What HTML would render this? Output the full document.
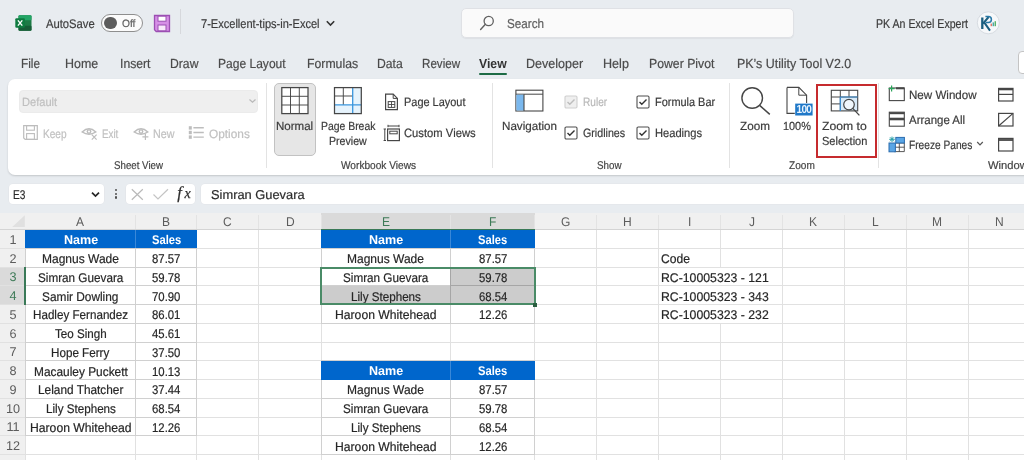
<!DOCTYPE html><html><head><meta charset="utf-8"><style>
html,body{margin:0;padding:0;}
body{width:1024px;height:460px;overflow:hidden;position:relative;background:#e8ecf0;font-family:"Liberation Sans",sans-serif;}
.t{position:absolute;white-space:nowrap;line-height:1;transform-origin:0 0;text-rendering:geometricPrecision;-webkit-text-stroke:0.2px currentColor;}
.b{-webkit-text-stroke:0;}
</style></head><body><div style="position:absolute;left:0;top:0;width:1024px;height:460px;overflow:hidden;will-change:transform;">
<svg style="position:absolute;left:15px;top:15px" width="17" height="16" viewBox="0 0 17 16">
<rect x="3.5" y="0.3" width="13" height="15.4" rx="1.3" fill="#1d7a45"/>
<rect x="3.5" y="0.3" width="13" height="5" fill="#23a566" rx="1"/>
<rect x="3.5" y="10.7" width="13" height="5" fill="#175c36" rx="1"/>
<rect x="0.3" y="3.2" width="9.6" height="9.6" rx="1.1" fill="#0f7b40"/>
<path d="M2.9 5.4 L7.3 10.6 M7.3 5.4 L2.9 10.6" stroke="#fff" stroke-width="1.4"/>
</svg>
<div class="t" style="left:46.00px;top:18px;font-size:12.50px;color:#3d3d3d;transform:scaleX(0.899);">AutoSave</div>
<div style="position:absolute;left:101px;top:13.7px;width:39.6px;height:15.9px;border:1.3px solid #8e8e8e;border-radius:10px;background:#fbfbfb;"></div>
<div style="position:absolute;left:104.2px;top:16.7px;width:12.8px;height:12.8px;border-radius:50%;background:#5c5c5c;"></div>
<div class="t" style="left:122.00px;top:19px;font-size:10.61px;color:#616161;transform:scaleX(0.965);">Off</div>
<svg style="position:absolute;left:153px;top:14px" width="19" height="19" viewBox="0 0 19 19">
<path d="M1.5 1.5 H16.5 V17.5 H3.2 L1.5 15.8 Z" fill="#d68fe6" stroke="#9c4fb3" stroke-width="1.3"/>
<rect x="5" y="2.2" width="8" height="5" fill="#fff" stroke="#9c4fb3" stroke-width="1"/>
<rect x="5" y="11" width="8" height="5.8" fill="#f8e8fb" stroke="#9c4fb3" stroke-width="1"/>
</svg>
<div style="position:absolute;left:180px;top:9px;width:1px;height:25px;background:#d6d8dc;"></div>
<div class="t" style="left:201.00px;top:18px;font-size:12.79px;color:#3b3b3b;transform:scaleX(0.865);">7-Excellent-tips-in-Excel</div>
<svg style="position:absolute;left:325px;top:19px" width="11" height="9" viewBox="0 0 11 9"><path d="M1.8 2.3 L5.5 6 L9.2 2.3" fill="none" stroke="#333" stroke-width="1.6"/></svg>
<div style="position:absolute;left:460.5px;top:8px;width:333px;height:30px;background:#fafafa;border:1px solid #dfe1e5;border-radius:5px;box-sizing:border-box;box-shadow:0 1px 1px rgba(0,0,0,0.05);"></div>
<svg style="position:absolute;left:478px;top:14px" width="18" height="18" viewBox="0 0 18 18"><circle cx="10.7" cy="7" r="4.6" fill="none" stroke="#616161" stroke-width="1.3"/><path d="M7.4 10.3 L2.6 15.4" stroke="#616161" stroke-width="1.4" stroke-linecap="round"/></svg>
<div class="t" style="left:507.40px;top:18px;font-size:12.94px;color:#616161;transform:scaleX(0.903);">Search</div>
<div class="t" style="left:875.50px;top:18px;font-size:12.65px;color:#3b3b3b;transform:scaleX(0.839);">PK An Excel Expert</div>
<svg style="position:absolute;left:976px;top:11px" width="25" height="25" viewBox="0 0 25 25">
<circle cx="12.3" cy="11.8" r="11" fill="#f6f8fa" stroke="#cfd4da" stroke-width="0.8"/>
<path d="M6.3 6.5 V18" stroke="#1b5f80" stroke-width="2.3" fill="none"/>
<path d="M7 12.6 L12.6 6 M8.2 11.4 L14 19.6" stroke="#1b5f80" stroke-width="2" fill="none"/>
<path d="M9.4 5.4 H12.4 A3 3 0 0 1 12.4 11.4 H10" stroke="#2a7aa8" stroke-width="1.5" fill="none"/>
<rect x="14.6" y="12.6" width="1.3" height="2.6" fill="#e06a5a"/><rect x="16.6" y="11.4" width="1.3" height="3.8" fill="#3aa0a0"/><rect x="18.6" y="10.2" width="1.3" height="5" fill="#4aaa5a"/>
</svg>
<div class="t" style="left:21.00px;top:57px;font-size:13.23px;color:#4a4a4a;transform:scaleX(0.892);">File</div>
<div class="t" style="left:65.40px;top:57px;font-size:13.23px;color:#4a4a4a;transform:scaleX(0.941);">Home</div>
<div class="t" style="left:119.50px;top:57px;font-size:13.23px;color:#4a4a4a;transform:scaleX(0.922);">Insert</div>
<div class="t" style="left:170.00px;top:57px;font-size:13.23px;color:#4a4a4a;transform:scaleX(0.922);">Draw</div>
<div class="t" style="left:218.30px;top:57px;font-size:13.23px;color:#4a4a4a;transform:scaleX(0.911);">Page Layout</div>
<div class="t" style="left:306.80px;top:57px;font-size:13.23px;color:#4a4a4a;transform:scaleX(0.927);">Formulas</div>
<div class="t" style="left:377.20px;top:57px;font-size:13.23px;color:#4a4a4a;transform:scaleX(0.923);">Data</div>
<div class="t" style="left:421.70px;top:57px;font-size:13.23px;color:#4a4a4a;transform:scaleX(0.878);">Review</div>
<div class="t" style="left:525.60px;top:57px;font-size:13.23px;color:#4a4a4a;transform:scaleX(0.949);">Developer</div>
<div class="t" style="left:602.70px;top:57px;font-size:13.23px;color:#4a4a4a;transform:scaleX(0.952);">Help</div>
<div class="t" style="left:648.90px;top:57px;font-size:13.23px;color:#4a4a4a;transform:scaleX(0.928);">Power Pivot</div>
<div class="t" style="left:736.70px;top:57px;font-size:13.23px;color:#4a4a4a;transform:scaleX(0.940);">PK’s Utility Tool V2.0</div>
<div class="t b" style="left:479.30px;top:57px;font-size:13.23px;color:#333333;font-weight:bold;transform:scaleX(0.925);">View</div>
<div style="position:absolute;left:478.8px;top:73.2px;width:28.7px;height:2.2px;background:#1d6b45;border-radius:1.1px;"></div>
<div style="position:absolute;left:1017.5px;top:51px;width:10px;height:23px;background:#fff;border:1px solid #c4c4c4;border-radius:4px;box-sizing:border-box;"></div>
<div style="position:absolute;left:8px;top:79px;width:1030px;height:96px;background:#fff;border-radius:7px;box-shadow:0 1px 2px rgba(0,0,0,0.16);"></div>
<div style="position:absolute;left:19.3px;top:89.9px;width:238.3px;height:23.3px;background:#efefef;border:1px solid #ebebeb;border-radius:4px;box-sizing:border-box;"></div>
<div class="t" style="left:22.30px;top:97px;font-size:11.92px;color:#bfbfbf;transform:scaleX(0.932);">Default</div>
<svg style="position:absolute;left:248px;top:97px" width="9" height="8" viewBox="0 0 9 8"><path d="M1.5 2.5 L4.5 5.3 L7.5 2.5" fill="none" stroke="#b8b8b8" stroke-width="1.2"/></svg>
<svg style="position:absolute;left:22px;top:124px" width="17" height="17" viewBox="0 0 17 17">
<path d="M1.7 1.6 H15.3 V15.4 H3.2 L1.7 13.9 Z" fill="none" stroke="#bdbdbd" stroke-width="1.2"/>
<rect x="4.6" y="1.6" width="7.8" height="4.6" fill="none" stroke="#bdbdbd" stroke-width="1.1"/>
<rect x="4.6" y="9.6" width="7.8" height="5.8" fill="none" stroke="#bdbdbd" stroke-width="1.1"/></svg>
<div class="t" style="left:43.00px;top:128px;font-size:12.21px;color:#c0c0c0;transform:scaleX(0.828);">Keep</div>
<svg style="position:absolute;left:81px;top:125px" width="18" height="16" viewBox="0 0 18 16">
<path d="M1.2 7 Q8 0.6 14.8 7 Q8 11.6 1.2 7 Z" fill="none" stroke="#bdbdbd" stroke-width="1.5"/><circle cx="8" cy="6.6" r="2.4" fill="#bdbdbd"/><circle cx="8" cy="6.6" r="1" fill="#fff"/>
<path d="M10.8 9.6 L15.6 14.6 M15.6 9.6 L10.8 14.6" stroke="#bdbdbd" stroke-width="1.2"/></svg>
<div class="t" style="left:101.70px;top:128px;font-size:12.21px;color:#c0c0c0;transform:scaleX(0.801);">Exit</div>
<svg style="position:absolute;left:133px;top:125px" width="18" height="16" viewBox="0 0 18 16">
<path d="M1.2 7 Q8 0.6 14.8 7 Q8 11.6 1.2 7 Z" fill="none" stroke="#bdbdbd" stroke-width="1.5"/><circle cx="8" cy="6.6" r="2.4" fill="#bdbdbd"/><circle cx="8" cy="6.6" r="1" fill="#fff"/>
<path d="M12.4 8.8 V15 M9.4 11.9 H15.4" stroke="#bdbdbd" stroke-width="1.2"/></svg>
<div class="t" style="left:152.50px;top:128px;font-size:12.21px;color:#c0c0c0;transform:scaleX(0.879);">New</div>
<svg style="position:absolute;left:188px;top:125px" width="17" height="16" viewBox="0 0 17 16">
<rect x="0.8" y="1.2" width="3" height="3.4" fill="#bdbdbd"/><rect x="0.8" y="5.8" width="3" height="3.4" fill="#bdbdbd"/><rect x="0.8" y="10.4" width="3" height="3.4" fill="#bdbdbd"/>
<path d="M5.4 2.8 H15.8 M5.4 7.5 H15.8 M5.4 12.1 H15.8" stroke="#bdbdbd" stroke-width="1.4"/></svg>
<div class="t" style="left:208.70px;top:128px;font-size:12.21px;color:#c0c0c0;transform:scaleX(0.972);">Options</div>
<div class="t" style="left:114.00px;top:161px;font-size:11.19px;color:#444444;transform:scaleX(0.868);">Sheet View</div>
<div style="position:absolute;left:265.5px;top:83px;width:1px;height:85px;background:#e3e3e3;"></div>
<div style="position:absolute;left:273.8px;top:82.6px;width:42.3px;height:73.1px;background:#e6e6e6;border:1px solid #c2c2c2;border-radius:5px;box-sizing:border-box;"></div>
<svg style="position:absolute;left:280px;top:86px" width="30" height="29" viewBox="0 0 30 29">
<rect x="1.8" y="1.6" width="26.2" height="26" fill="#fff" stroke="#464646" stroke-width="1.25"/>
<path d="M10.5 1.6 V27.6 M19.3 1.6 V27.6 M1.8 10.3 H28 M1.8 19 H28" stroke="#464646" stroke-width="0.95"/></svg>
<div class="t" style="left:276.00px;top:121px;font-size:11.77px;color:#3b3b3b;transform:scaleX(0.980);">Normal</div>
<svg style="position:absolute;left:333px;top:86px" width="30" height="29" viewBox="0 0 30 29">
<rect x="1.5" y="1.6" width="26.8" height="26" fill="#fff"/>
<rect x="19.7" y="1.6" width="8.6" height="26" fill="#e6f3fc"/><rect x="1.5" y="18.9" width="26.8" height="8.7" fill="#e6f3fc"/>
<path d="M10.3 1.6 V18.9 M1.5 10 H19.7" stroke="#464646" stroke-width="0.95"/>
<path d="M19.7 1.6 V27.6 M1.5 18.9 H28.3" stroke="#3a96dd" stroke-width="1.3"/>
<rect x="1.5" y="1.6" width="26.8" height="26" fill="none" stroke="#464646" stroke-width="1.25"/></svg>
<div class="t" style="left:320.80px;top:121px;font-size:11.77px;color:#3b3b3b;transform:scaleX(0.885);">Page Break</div>
<div class="t" style="left:328.80px;top:136px;font-size:11.77px;color:#3b3b3b;transform:scaleX(0.902);">Preview</div>
<svg style="position:absolute;left:384px;top:93px" width="15" height="18" viewBox="0 0 15 18">
<path d="M1.6 1.2 H9.2 L13.4 5.4 V16.6 H1.6 Z" fill="none" stroke="#464646" stroke-width="1.2"/><path d="M9.2 1.2 V5.4 H13.4" fill="none" stroke="#464646" stroke-width="1"/>
<rect x="4.2" y="8.6" width="6.6" height="5.8" fill="none" stroke="#464646" stroke-width="1"/><path d="M7.5 8.6 V14.4 M4.2 11.5 H10.8" stroke="#464646" stroke-width="0.9"/></svg>
<div class="t" style="left:403.80px;top:96px;font-size:12.06px;color:#3b3b3b;transform:scaleX(0.908);">Page Layout</div>
<svg style="position:absolute;left:383px;top:124px" width="18" height="18" viewBox="0 0 18 18">
<path d="M5 2 H16 M5 0.8 V3.2 M16 0.8 V3.2 M1.8 5 V16.5 M0.6 5 H3 M0.6 16.5 H3" stroke="#464646" stroke-width="1"/>
<rect x="4.6" y="5" width="11.8" height="11.6" fill="none" stroke="#464646" stroke-width="1.2"/>
<rect x="6.8" y="7.2" width="7.4" height="2.6" fill="none" stroke="#464646" stroke-width="1"/></svg>
<div class="t" style="left:403.50px;top:127px;font-size:12.06px;color:#3b3b3b;transform:scaleX(0.933);">Custom Views</div>
<div class="t" style="left:340.90px;top:161px;font-size:11.19px;color:#444444;transform:scaleX(0.905);">Workbook Views</div>
<div style="position:absolute;left:491.5px;top:83px;width:1px;height:85px;background:#e3e3e3;"></div>
<svg style="position:absolute;left:515px;top:89px" width="29" height="23" viewBox="0 0 29 23">
<rect x="0.9" y="1.2" width="27" height="20.8" fill="#fff" stroke="#464646" stroke-width="1.1"/>
<path d="M0.9 5.2 H27.9" stroke="#464646" stroke-width="1"/>
<rect x="1.4" y="5.7" width="7.6" height="15.8" fill="#7ab8ee"/><path d="M9 5.2 V22" stroke="#464646" stroke-width="1.1"/></svg>
<div class="t" style="left:501.50px;top:121px;font-size:11.77px;color:#3b3b3b;transform:scaleX(0.989);">Navigation</div>
<svg style="position:absolute;left:563.5px;top:94.8px" width="14" height="14" viewBox="0 0 14 14">
<rect x="1" y="1" width="12" height="12" rx="1.2" fill="#efefef" stroke="#cfcfcf" stroke-width="1.1"/>
<path d="M3.5 7 L5.8 9.3 L10.5 4.6" fill="none" stroke="#bdbdbd" stroke-width="1.4"/></svg>
<div class="t" style="left:582.80px;top:96px;font-size:12.06px;color:#b8b8b8;transform:scaleX(0.839);">Ruler</div>
<svg style="position:absolute;left:563.5px;top:125.6px" width="14" height="14" viewBox="0 0 14 14">
<rect x="1" y="1" width="12" height="12" rx="1.2" fill="#fff" stroke="#4f4f4f" stroke-width="1.1"/>
<path d="M3.5 7 L5.8 9.3 L10.5 4.6" fill="none" stroke="#333" stroke-width="1.4"/></svg>
<div class="t" style="left:582.80px;top:127px;font-size:12.06px;color:#3b3b3b;transform:scaleX(0.886);">Gridlines</div>
<svg style="position:absolute;left:635.5px;top:94.8px" width="14" height="14" viewBox="0 0 14 14">
<rect x="1" y="1" width="12" height="12" rx="1.2" fill="#fff" stroke="#4f4f4f" stroke-width="1.1"/>
<path d="M3.5 7 L5.8 9.3 L10.5 4.6" fill="none" stroke="#333" stroke-width="1.4"/></svg>
<div class="t" style="left:654.50px;top:96px;font-size:12.06px;color:#3b3b3b;transform:scaleX(0.907);">Formula Bar</div>
<svg style="position:absolute;left:635.5px;top:125.6px" width="14" height="14" viewBox="0 0 14 14">
<rect x="1" y="1" width="12" height="12" rx="1.2" fill="#fff" stroke="#4f4f4f" stroke-width="1.1"/>
<path d="M3.5 7 L5.8 9.3 L10.5 4.6" fill="none" stroke="#333" stroke-width="1.4"/></svg>
<div class="t" style="left:654.50px;top:127px;font-size:12.06px;color:#3b3b3b;transform:scaleX(0.924);">Headings</div>
<div class="t" style="left:597.00px;top:161px;font-size:11.19px;color:#444444;transform:scaleX(0.874);">Show</div>
<div style="position:absolute;left:728.5px;top:83px;width:1px;height:85px;background:#e3e3e3;"></div>
<svg style="position:absolute;left:740px;top:86px" width="32" height="30" viewBox="0 0 32 30">
<circle cx="12.2" cy="12" r="10.3" fill="none" stroke="#464646" stroke-width="1.4"/>
<path d="M19.6 19.4 L29.8 28.4" stroke="#464646" stroke-width="1.5"/></svg>
<div class="t" style="left:740.30px;top:121px;font-size:11.77px;color:#3b3b3b;transform:scaleX(0.994);">Zoom</div>
<svg style="position:absolute;left:785px;top:86px" width="30" height="31" viewBox="0 0 30 31">
<path d="M2 1.4 H13.8 L21.6 9.2 V17 M2 1.4 V27.4 H9.8" fill="none" stroke="#464646" stroke-width="1.1"/><path d="M13.8 1.4 V9.2 H21.6" fill="none" stroke="#464646" stroke-width="1"/>
<rect x="10.2" y="17.6" width="17.4" height="11.9" fill="#1f78c8"/>
<text x="18.9" y="27.4" font-family="Liberation Sans" font-weight="bold" font-size="10" fill="#e8f4ff" text-anchor="middle" letter-spacing="-0.7">100</text></svg>
<div class="t" style="left:783.40px;top:121px;font-size:11.77px;color:#3b3b3b;transform:scaleX(0.926);">100%</div>
<div style="position:absolute;left:816px;top:84px;width:61px;height:73.8px;border:2px solid #c62b2e;box-sizing:border-box;"></div>
<svg style="position:absolute;left:829px;top:88px" width="34" height="30" viewBox="0 0 34 30">
<rect x="11.3" y="9" width="17.4" height="13.9" fill="#d9ebf9"/>
<rect x="2.3" y="2.3" width="26.4" height="20.6" fill="none" stroke="#464646" stroke-width="1.1"/>
<path d="M11.3 2.3 V22.9 M20 2.3 V9 M2.3 9 H28.7 M2.3 15.9 H11.3" stroke="#464646" stroke-width="1"/>
<path d="M11.3 9 V22.9 M11.3 9 H28.7" stroke="#3a8fd6" stroke-width="1.2"/>
<circle cx="20" cy="16.6" r="5.3" fill="#fff" fill-opacity="0.6" stroke="#464646" stroke-width="1.2"/>
<path d="M23.8 20.4 L30.4 27.4" stroke="#464646" stroke-width="1.3"/></svg>
<div class="t" style="left:822.30px;top:121px;font-size:11.77px;color:#3b3b3b;transform:scaleX(1.035);">Zoom to</div>
<div class="t" style="left:821.60px;top:136px;font-size:11.77px;color:#3b3b3b;transform:scaleX(0.937);">Selection</div>
<div class="t" style="left:789.30px;top:161px;font-size:11.19px;color:#444444;transform:scaleX(0.902);">Zoom</div>
<div style="position:absolute;left:877.5px;top:83px;width:1px;height:85px;background:#e3e3e3;"></div>
<svg style="position:absolute;left:887px;top:85px" width="19" height="17" viewBox="0 0 19 17">
<rect x="2.3" y="3" width="15" height="12.6" fill="none" stroke="#464646" stroke-width="1.1"/><path d="M9 3.3 H17.3" stroke="#464646" stroke-width="2"/>
<path d="M4.6 0.6 V6.6 M1.6 3.6 H7.6" stroke="#2aa35a" stroke-width="1.2"/></svg>
<div class="t" style="left:909.00px;top:89px;font-size:12.06px;color:#3b3b3b;transform:scaleX(0.961);">New Window</div>
<svg style="position:absolute;left:887px;top:110px" width="19" height="18" viewBox="0 0 19 18">
<rect x="2.3" y="2.2" width="15" height="14" fill="none" stroke="#464646" stroke-width="1.1"/><path d="M2.3 3.2 H17.3" stroke="#464646" stroke-width="2"/><path d="M2.3 9 H17.3" stroke="#464646" stroke-width="2.6"/></svg>
<div class="t" style="left:909.00px;top:114px;font-size:12.06px;color:#3b3b3b;transform:scaleX(0.952);">Arrange All</div>
<svg style="position:absolute;left:887px;top:136px" width="19" height="17" viewBox="0 0 19 17">
<path d="M9 7 H17.3 V15.6 H7 M12.3 7 V15.6 M7 11.2 H17.3" fill="none" stroke="#464646" stroke-width="0.9"/>
<rect x="8.8" y="1.4" width="8.6" height="5.6" fill="#5aa6e6" stroke="#2b6cae" stroke-width="1"/>
<rect x="2" y="7" width="6.4" height="8.8" fill="#5aa6e6" stroke="#2b6cae" stroke-width="1"/>
<path d="M5 0.6 V6 M2.2 3.3 H7.8 M3 1.3 L7 5.3 M7 1.3 L3 5.3" stroke="#2aa0a8" stroke-width="1"/></svg>
<div class="t" style="left:909.00px;top:139px;font-size:12.06px;color:#3b3b3b;transform:scaleX(0.844);">Freeze Panes</div>
<svg style="position:absolute;left:976px;top:140px" width="8" height="7" viewBox="0 0 8 7"><path d="M1.2 2 L4 4.8 L6.8 2" fill="none" stroke="#555" stroke-width="1.2"/></svg>
<svg style="position:absolute;left:997px;top:86px" width="18" height="70" viewBox="0 0 18 70">
<rect x="1.6" y="2.4" width="14.4" height="12.6" fill="none" stroke="#464646" stroke-width="1.2"/><path d="M1.6 8.4 H16" stroke="#464646" stroke-width="1.2"/><path d="M1.6 3.4 H16" stroke="#464646" stroke-width="1.8"/>
<rect x="1.6" y="27.4" width="14.4" height="12.6" fill="none" stroke="#464646" stroke-width="1.2"/><path d="M1.6 40 L16 27.4" stroke="#464646" stroke-width="1.2"/>
<rect x="1.6" y="52.4" width="14.4" height="12.6" fill="none" stroke="#464646" stroke-width="1.2"/><path d="M1.6 54 H16" stroke="#464646" stroke-width="1.8"/></svg>
<div class="t" style="left:988.00px;top:161px;font-size:11.19px;color:#444444;transform:scaleX(1.000);">Window</div>
<div style="position:absolute;left:8.8px;top:183.5px;width:95.7px;height:20.7px;background:#fff;border-radius:4px;box-shadow:0 0 0 0.6px #e2e4e8;"></div>
<div class="t" style="left:13.00px;top:189px;font-size:12.65px;color:#2b2b2b;transform:scaleX(0.802);">E3</div>
<svg style="position:absolute;left:90px;top:190px" width="11" height="9" viewBox="0 0 11 9"><path d="M2 2.6 L5.5 6.1 L9 2.6" fill="none" stroke="#262626" stroke-width="1.7"/></svg>
<div style="position:absolute;left:114.5px;top:189.0px;width:2.4px;height:2.4px;background:#505050;border-radius:50%;"></div>
<div style="position:absolute;left:114.5px;top:192.6px;width:2.4px;height:2.4px;background:#505050;border-radius:50%;"></div>
<div style="position:absolute;left:114.5px;top:196.2px;width:2.4px;height:2.4px;background:#505050;border-radius:50%;"></div>
<div style="position:absolute;left:126px;top:183.5px;width:69.3px;height:20.7px;background:#fff;border-radius:4px;box-shadow:0 0 0 0.6px #e2e4e8;"></div>
<svg style="position:absolute;left:130px;top:188px" width="16" height="13" viewBox="0 0 16 13"><path d="M1.8 1.2 L12.8 11.8 M12.8 1.2 L1.8 11.8" stroke="#b9b9b9" stroke-width="1.2"/></svg>
<svg style="position:absolute;left:152px;top:188px" width="18" height="13" viewBox="0 0 18 13"><path d="M1.5 6.5 L6 11 L16 1.2" fill="none" stroke="#c4c4c4" stroke-width="1.2"/></svg>
<svg style="position:absolute;left:175px;top:184px" width="20" height="20" viewBox="0 0 20 20"><text x="2.2" y="14.2" font-family="Liberation Serif" font-style="italic" font-size="16.5" fill="#2e2e2e" stroke="#2e2e2e" stroke-width="0.25">f</text><text x="9.4" y="14.2" font-family="Liberation Serif" font-style="italic" font-size="14" fill="#2e2e2e" stroke="#2e2e2e" stroke-width="0.25">x</text></svg>
<div style="position:absolute;left:201px;top:183.5px;width:830px;height:20.7px;background:#fff;border-radius:4px;box-shadow:0 0 0 0.6px #e2e4e8;"></div>
<div class="t" style="left:211.00px;top:189px;font-size:12.79px;color:#2b2b2b;transform:scaleX(1.006);">Simran Guevara</div>
<div style="position:absolute;left:25px;top:229.7px;width:1000px;height:231px;background:#fff;"></div>
<div style="position:absolute;left:0px;top:213px;width:1024px;height:16.69999999999999px;background:#f0f0f0;"></div>
<div style="position:absolute;left:0px;top:229.7px;width:25px;height:231px;background:#f0f0f0;"></div>
<div style="position:absolute;left:321px;top:213px;width:213.60000000000002px;height:16.69999999999999px;background:#dadada;"></div>
<div style="position:absolute;left:0px;top:267.2px;width:25px;height:37.5px;background:#dadada;"></div>
<div style="position:absolute;left:24.5px;top:229.7px;width:1px;height:230.3px;background:#e1e1e1;"></div>
<div style="position:absolute;left:135.1px;top:214.5px;width:1px;height:15px;background:#e3e3e3;"></div>
<div style="position:absolute;left:135.1px;top:229.7px;width:1px;height:230.3px;background:#e1e1e1;"></div>
<div style="position:absolute;left:196.2px;top:214.5px;width:1px;height:15px;background:#e3e3e3;"></div>
<div style="position:absolute;left:196.2px;top:229.7px;width:1px;height:230.3px;background:#e1e1e1;"></div>
<div style="position:absolute;left:258.4px;top:214.5px;width:1px;height:15px;background:#e3e3e3;"></div>
<div style="position:absolute;left:258.4px;top:229.7px;width:1px;height:230.3px;background:#e1e1e1;"></div>
<div style="position:absolute;left:320.5px;top:214.5px;width:1px;height:15px;background:#e3e3e3;"></div>
<div style="position:absolute;left:320.5px;top:229.7px;width:1px;height:230.3px;background:#e1e1e1;"></div>
<div style="position:absolute;left:449.7px;top:214.5px;width:1px;height:15px;background:#e3e3e3;"></div>
<div style="position:absolute;left:449.7px;top:229.7px;width:1px;height:230.3px;background:#e1e1e1;"></div>
<div style="position:absolute;left:534.1px;top:214.5px;width:1px;height:15px;background:#e3e3e3;"></div>
<div style="position:absolute;left:534.1px;top:229.7px;width:1px;height:230.3px;background:#e1e1e1;"></div>
<div style="position:absolute;left:596.1px;top:214.5px;width:1px;height:15px;background:#e3e3e3;"></div>
<div style="position:absolute;left:596.1px;top:229.7px;width:1px;height:230.3px;background:#e1e1e1;"></div>
<div style="position:absolute;left:658.1px;top:214.5px;width:1px;height:15px;background:#e3e3e3;"></div>
<div style="position:absolute;left:658.1px;top:229.7px;width:1px;height:230.3px;background:#e1e1e1;"></div>
<div style="position:absolute;left:720.1px;top:214.5px;width:1px;height:15px;background:#e3e3e3;"></div>
<div style="position:absolute;left:720.1px;top:229.7px;width:1px;height:37.5px;background:#e1e1e1;"></div>
<div style="position:absolute;left:720.1px;top:323.45px;width:1px;height:136.55px;background:#e1e1e1;"></div>
<div style="position:absolute;left:781.9px;top:214.5px;width:1px;height:15px;background:#e3e3e3;"></div>
<div style="position:absolute;left:781.9px;top:229.7px;width:1px;height:230.3px;background:#e1e1e1;"></div>
<div style="position:absolute;left:843.8px;top:214.5px;width:1px;height:15px;background:#e3e3e3;"></div>
<div style="position:absolute;left:843.8px;top:229.7px;width:1px;height:230.3px;background:#e1e1e1;"></div>
<div style="position:absolute;left:905.9px;top:214.5px;width:1px;height:15px;background:#e3e3e3;"></div>
<div style="position:absolute;left:905.9px;top:229.7px;width:1px;height:230.3px;background:#e1e1e1;"></div>
<div style="position:absolute;left:968.0px;top:214.5px;width:1px;height:15px;background:#e3e3e3;"></div>
<div style="position:absolute;left:968.0px;top:229.7px;width:1px;height:230.3px;background:#e1e1e1;"></div>
<div style="position:absolute;left:1030.0px;top:214.5px;width:1px;height:15px;background:#e3e3e3;"></div>
<div style="position:absolute;left:1030.0px;top:229.7px;width:1px;height:230.3px;background:#e1e1e1;"></div>
<div style="position:absolute;left:0px;top:229.2px;width:1024px;height:1px;background:#e1e1e1;"></div>
<div style="position:absolute;left:0px;top:247.95px;width:1024px;height:1px;background:#e1e1e1;"></div>
<div style="position:absolute;left:0px;top:266.7px;width:1024px;height:1px;background:#e1e1e1;"></div>
<div style="position:absolute;left:0px;top:285.45px;width:1024px;height:1px;background:#e1e1e1;"></div>
<div style="position:absolute;left:0px;top:304.2px;width:1024px;height:1px;background:#e1e1e1;"></div>
<div style="position:absolute;left:0px;top:322.95px;width:1024px;height:1px;background:#e1e1e1;"></div>
<div style="position:absolute;left:0px;top:341.7px;width:1024px;height:1px;background:#e1e1e1;"></div>
<div style="position:absolute;left:0px;top:360.45px;width:1024px;height:1px;background:#e1e1e1;"></div>
<div style="position:absolute;left:0px;top:379.2px;width:1024px;height:1px;background:#e1e1e1;"></div>
<div style="position:absolute;left:0px;top:397.95px;width:1024px;height:1px;background:#e1e1e1;"></div>
<div style="position:absolute;left:0px;top:416.7px;width:1024px;height:1px;background:#e1e1e1;"></div>
<div style="position:absolute;left:0px;top:435.45px;width:1024px;height:1px;background:#e1e1e1;"></div>
<div style="position:absolute;left:0px;top:454.2px;width:1024px;height:1px;background:#e1e1e1;"></div>
<div style="position:absolute;left:24.5px;top:229.7px;width:1px;height:206.25px;background:#d0d0d0;"></div>
<div style="position:absolute;left:135.1px;top:229.7px;width:1px;height:206.25px;background:#d0d0d0;"></div>
<div style="position:absolute;left:196.2px;top:229.7px;width:1px;height:206.25px;background:#d0d0d0;"></div>
<div style="position:absolute;left:25px;top:229.2px;width:171.7px;height:1px;background:#d0d0d0;"></div>
<div style="position:absolute;left:25px;top:247.95px;width:171.7px;height:1px;background:#d0d0d0;"></div>
<div style="position:absolute;left:25px;top:266.7px;width:171.7px;height:1px;background:#d0d0d0;"></div>
<div style="position:absolute;left:25px;top:285.45px;width:171.7px;height:1px;background:#d0d0d0;"></div>
<div style="position:absolute;left:25px;top:304.2px;width:171.7px;height:1px;background:#d0d0d0;"></div>
<div style="position:absolute;left:25px;top:322.95px;width:171.7px;height:1px;background:#d0d0d0;"></div>
<div style="position:absolute;left:25px;top:341.7px;width:171.7px;height:1px;background:#d0d0d0;"></div>
<div style="position:absolute;left:25px;top:360.45px;width:171.7px;height:1px;background:#d0d0d0;"></div>
<div style="position:absolute;left:25px;top:379.2px;width:171.7px;height:1px;background:#d0d0d0;"></div>
<div style="position:absolute;left:25px;top:397.95px;width:171.7px;height:1px;background:#d0d0d0;"></div>
<div style="position:absolute;left:25px;top:416.7px;width:171.7px;height:1px;background:#d0d0d0;"></div>
<div style="position:absolute;left:25px;top:435.45px;width:171.7px;height:1px;background:#d0d0d0;"></div>
<div style="position:absolute;left:320.5px;top:229.7px;width:1px;height:93.75px;background:#d0d0d0;"></div>
<div style="position:absolute;left:449.7px;top:229.7px;width:1px;height:93.75px;background:#d0d0d0;"></div>
<div style="position:absolute;left:534.1px;top:229.7px;width:1px;height:93.75px;background:#d0d0d0;"></div>
<div style="position:absolute;left:321px;top:229.2px;width:213.60000000000002px;height:1px;background:#d0d0d0;"></div>
<div style="position:absolute;left:321px;top:247.95px;width:213.60000000000002px;height:1px;background:#d0d0d0;"></div>
<div style="position:absolute;left:321px;top:266.7px;width:213.60000000000002px;height:1px;background:#d0d0d0;"></div>
<div style="position:absolute;left:321px;top:285.45px;width:213.60000000000002px;height:1px;background:#d0d0d0;"></div>
<div style="position:absolute;left:321px;top:304.2px;width:213.60000000000002px;height:1px;background:#d0d0d0;"></div>
<div style="position:absolute;left:321px;top:322.95px;width:213.60000000000002px;height:1px;background:#d0d0d0;"></div>
<div style="position:absolute;left:320.5px;top:360.95px;width:1px;height:93.75px;background:#d0d0d0;"></div>
<div style="position:absolute;left:449.7px;top:360.95px;width:1px;height:93.75px;background:#d0d0d0;"></div>
<div style="position:absolute;left:534.1px;top:360.95px;width:1px;height:93.75px;background:#d0d0d0;"></div>
<div style="position:absolute;left:321px;top:360.45px;width:213.60000000000002px;height:1px;background:#d0d0d0;"></div>
<div style="position:absolute;left:321px;top:379.2px;width:213.60000000000002px;height:1px;background:#d0d0d0;"></div>
<div style="position:absolute;left:321px;top:397.95px;width:213.60000000000002px;height:1px;background:#d0d0d0;"></div>
<div style="position:absolute;left:321px;top:416.7px;width:213.60000000000002px;height:1px;background:#d0d0d0;"></div>
<div style="position:absolute;left:321px;top:435.45px;width:213.60000000000002px;height:1px;background:#d0d0d0;"></div>
<div style="position:absolute;left:321px;top:454.2px;width:213.60000000000002px;height:1px;background:#d0d0d0;"></div>
<div style="position:absolute;left:450.2px;top:267.2px;width:84.40000000000003px;height:18.75px;background:rgba(0,0,0,0.2);"></div>
<div style="position:absolute;left:321px;top:285.95px;width:213.60000000000002px;height:18.75px;background:rgba(0,0,0,0.2);"></div>
<div style="position:absolute;left:25px;top:230.2px;width:171.7px;height:18.25px;background:#0066cc;"></div>
<div style="position:absolute;left:135.1px;top:230.2px;width:1px;height:18.25px;background:#3a88d8;"></div>
<div style="position:absolute;left:321px;top:230.2px;width:213.60000000000002px;height:18.25px;background:#0066cc;"></div>
<div style="position:absolute;left:449.7px;top:230.2px;width:1px;height:18.25px;background:#3a88d8;"></div>
<div style="position:absolute;left:321px;top:361.45px;width:213.60000000000002px;height:18.25px;background:#0066cc;"></div>
<div style="position:absolute;left:449.7px;top:361.45px;width:1px;height:18.25px;background:#3a88d8;"></div>
<div style="position:absolute;left:0px;top:229.2px;width:1024px;height:1px;background:#d4d4d4;"></div>
<div style="position:absolute;left:321px;top:228.7px;width:213.60000000000002px;height:1.5px;background:#3a7a58;"></div>
<div style="position:absolute;left:24.3px;top:267.2px;width:1.5px;height:37.5px;background:#3a7a58;"></div>
<svg style="position:absolute;left:8px;top:214px" width="18" height="14" viewBox="0 0 18 14"><path d="M16.8 1.2 V13 H4.2 Z" fill="#e0e0e0"/></svg>
<div class="t" style="left:76.29px;top:216px;font-size:12.65px;color:#5c5c5c;transform:scaleX(0.950);-webkit-text-stroke:0;">A</div>
<div class="t" style="left:162.14px;top:216px;font-size:12.65px;color:#5c5c5c;transform:scaleX(0.950);-webkit-text-stroke:0;">B</div>
<div class="t" style="left:223.46px;top:216px;font-size:12.65px;color:#5c5c5c;transform:scaleX(0.950);-webkit-text-stroke:0;">C</div>
<div class="t" style="left:285.61px;top:216px;font-size:12.65px;color:#5c5c5c;transform:scaleX(0.950);-webkit-text-stroke:0;">D</div>
<div class="t" style="left:381.59px;top:216px;font-size:12.65px;color:#3d7a57;transform:scaleX(0.950);-webkit-text-stroke:0;">E</div>
<div class="t" style="left:488.73px;top:216px;font-size:12.65px;color:#3d7a57;transform:scaleX(0.950);-webkit-text-stroke:0;">F</div>
<div class="t" style="left:560.93px;top:216px;font-size:12.65px;color:#5c5c5c;transform:scaleX(0.950);-webkit-text-stroke:0;">G</div>
<div class="t" style="left:623.26px;top:216px;font-size:12.65px;color:#5c5c5c;transform:scaleX(0.950);-webkit-text-stroke:0;">H</div>
<div class="t" style="left:687.93px;top:216px;font-size:12.65px;color:#5c5c5c;transform:scaleX(0.950);-webkit-text-stroke:0;">I</div>
<div class="t" style="left:748.50px;top:216px;font-size:12.65px;color:#5c5c5c;transform:scaleX(0.950);-webkit-text-stroke:0;">J</div>
<div class="t" style="left:809.34px;top:216px;font-size:12.65px;color:#5c5c5c;transform:scaleX(0.950);-webkit-text-stroke:0;">K</div>
<div class="t" style="left:872.01px;top:216px;font-size:12.65px;color:#5c5c5c;transform:scaleX(0.950);-webkit-text-stroke:0;">L</div>
<div class="t" style="left:932.45px;top:216px;font-size:12.65px;color:#5c5c5c;transform:scaleX(0.950);-webkit-text-stroke:0;">M</div>
<div class="t" style="left:995.16px;top:216px;font-size:12.65px;color:#5c5c5c;transform:scaleX(0.950);-webkit-text-stroke:0;">N</div>
<div class="t" style="left:9.48px;top:234px;font-size:12.65px;color:#5c5c5c;transform:scaleX(1.000);-webkit-text-stroke:0;">1</div>
<div class="t" style="left:9.48px;top:253px;font-size:12.65px;color:#5c5c5c;transform:scaleX(1.000);-webkit-text-stroke:0;">2</div>
<div class="t" style="left:9.48px;top:271px;font-size:12.65px;color:#3d7a57;transform:scaleX(1.000);-webkit-text-stroke:0;">3</div>
<div class="t" style="left:9.48px;top:290px;font-size:12.65px;color:#3d7a57;transform:scaleX(1.000);-webkit-text-stroke:0;">4</div>
<div class="t" style="left:9.48px;top:309px;font-size:12.65px;color:#5c5c5c;transform:scaleX(1.000);-webkit-text-stroke:0;">5</div>
<div class="t" style="left:9.48px;top:328px;font-size:12.65px;color:#5c5c5c;transform:scaleX(1.000);-webkit-text-stroke:0;">6</div>
<div class="t" style="left:9.48px;top:346px;font-size:12.65px;color:#5c5c5c;transform:scaleX(1.000);-webkit-text-stroke:0;">7</div>
<div class="t" style="left:9.48px;top:365px;font-size:12.65px;color:#5c5c5c;transform:scaleX(1.000);-webkit-text-stroke:0;">8</div>
<div class="t" style="left:9.48px;top:384px;font-size:12.65px;color:#5c5c5c;transform:scaleX(1.000);-webkit-text-stroke:0;">9</div>
<div class="t" style="left:5.97px;top:403px;font-size:12.65px;color:#5c5c5c;transform:scaleX(1.000);-webkit-text-stroke:0;">10</div>
<div class="t" style="left:6.44px;top:421px;font-size:12.65px;color:#5c5c5c;transform:scaleX(1.000);-webkit-text-stroke:0;">11</div>
<div class="t" style="left:5.97px;top:440px;font-size:12.65px;color:#5c5c5c;transform:scaleX(1.000);-webkit-text-stroke:0;">12</div>
<div class="t b" style="left:63.50px;top:234px;font-size:12.65px;color:#fff;font-weight:bold;transform:scaleX(0.993);">Name</div>
<div class="t b" style="left:151.80px;top:234px;font-size:12.65px;color:#fff;font-weight:bold;transform:scaleX(0.887);">Sales</div>
<div class="t" style="left:42.15px;top:253px;font-size:12.65px;color:#262626;transform:scaleX(0.949);">Magnus Wade</div>
<div class="t" style="left:152.25px;top:253px;font-size:12.65px;color:#262626;transform:scaleX(0.898);">87.57</div>
<div class="t" style="left:37.90px;top:272px;font-size:12.65px;color:#262626;transform:scaleX(0.927);">Simran Guevara</div>
<div class="t" style="left:152.25px;top:272px;font-size:12.65px;color:#262626;transform:scaleX(0.898);">59.78</div>
<div class="t" style="left:42.35px;top:291px;font-size:12.65px;color:#262626;transform:scaleX(0.938);">Samir Dowling</div>
<div class="t" style="left:152.25px;top:291px;font-size:12.65px;color:#262626;transform:scaleX(0.898);">70.90</div>
<div class="t" style="left:33.00px;top:309px;font-size:12.65px;color:#262626;transform:scaleX(0.921);">Hadley Fernandez</div>
<div class="t" style="left:152.25px;top:309px;font-size:12.65px;color:#262626;transform:scaleX(0.898);">86.01</div>
<div class="t" style="left:54.75px;top:328px;font-size:12.65px;color:#262626;transform:scaleX(0.919);">Teo Singh</div>
<div class="t" style="left:152.25px;top:328px;font-size:12.65px;color:#262626;transform:scaleX(0.898);">45.61</div>
<div class="t" style="left:51.45px;top:347px;font-size:12.65px;color:#262626;transform:scaleX(0.922);">Hope Ferry</div>
<div class="t" style="left:152.25px;top:347px;font-size:12.65px;color:#262626;transform:scaleX(0.898);">37.50</div>
<div class="t" style="left:33.70px;top:366px;font-size:12.65px;color:#262626;transform:scaleX(0.940);">Macauley Puckett</div>
<div class="t" style="left:152.25px;top:366px;font-size:12.65px;color:#262626;transform:scaleX(0.898);">10.13</div>
<div class="t" style="left:37.90px;top:384px;font-size:12.65px;color:#262626;transform:scaleX(0.937);">Leland Thatcher</div>
<div class="t" style="left:152.25px;top:384px;font-size:12.65px;color:#262626;transform:scaleX(0.898);">37.44</div>
<div class="t" style="left:45.65px;top:403px;font-size:12.65px;color:#262626;transform:scaleX(0.921);">Lily Stephens</div>
<div class="t" style="left:152.25px;top:403px;font-size:12.65px;color:#262626;transform:scaleX(0.898);">68.54</div>
<div class="t" style="left:29.85px;top:422px;font-size:12.65px;color:#262626;transform:scaleX(0.963);">Haroon Whitehead</div>
<div class="t" style="left:152.25px;top:422px;font-size:12.65px;color:#262626;transform:scaleX(0.898);">12.26</div>
<div class="t b" style="left:368.80px;top:234px;font-size:12.65px;color:#fff;font-weight:bold;transform:scaleX(0.993);">Name</div>
<div class="t b" style="left:478.05px;top:234px;font-size:12.65px;color:#fff;font-weight:bold;transform:scaleX(0.887);">Sales</div>
<div class="t" style="left:347.45px;top:253px;font-size:12.65px;color:#262626;transform:scaleX(0.949);">Magnus Wade</div>
<div class="t" style="left:478.50px;top:253px;font-size:12.65px;color:#262626;transform:scaleX(0.898);">87.57</div>
<div class="t" style="left:343.20px;top:272px;font-size:12.65px;color:#262626;transform:scaleX(0.927);">Simran Guevara</div>
<div class="t" style="left:478.50px;top:272px;font-size:12.65px;color:#262626;transform:scaleX(0.898);">59.78</div>
<div class="t" style="left:350.95px;top:291px;font-size:12.65px;color:#262626;transform:scaleX(0.921);">Lily Stephens</div>
<div class="t" style="left:478.50px;top:291px;font-size:12.65px;color:#262626;transform:scaleX(0.898);">68.54</div>
<div class="t" style="left:335.15px;top:309px;font-size:12.65px;color:#262626;transform:scaleX(0.963);">Haroon Whitehead</div>
<div class="t" style="left:478.50px;top:309px;font-size:12.65px;color:#262626;transform:scaleX(0.898);">12.26</div>
<div class="t b" style="left:368.80px;top:365px;font-size:12.65px;color:#fff;font-weight:bold;transform:scaleX(0.993);">Name</div>
<div class="t b" style="left:478.05px;top:365px;font-size:12.65px;color:#fff;font-weight:bold;transform:scaleX(0.887);">Sales</div>
<div class="t" style="left:347.45px;top:384px;font-size:12.65px;color:#262626;transform:scaleX(0.949);">Magnus Wade</div>
<div class="t" style="left:478.50px;top:384px;font-size:12.65px;color:#262626;transform:scaleX(0.898);">87.57</div>
<div class="t" style="left:343.20px;top:403px;font-size:12.65px;color:#262626;transform:scaleX(0.927);">Simran Guevara</div>
<div class="t" style="left:478.50px;top:403px;font-size:12.65px;color:#262626;transform:scaleX(0.898);">59.78</div>
<div class="t" style="left:350.95px;top:422px;font-size:12.65px;color:#262626;transform:scaleX(0.921);">Lily Stephens</div>
<div class="t" style="left:478.50px;top:422px;font-size:12.65px;color:#262626;transform:scaleX(0.898);">68.54</div>
<div class="t" style="left:335.15px;top:441px;font-size:12.65px;color:#262626;transform:scaleX(0.963);">Haroon Whitehead</div>
<div class="t" style="left:478.50px;top:441px;font-size:12.65px;color:#262626;transform:scaleX(0.898);">12.26</div>
<div class="t" style="left:661.30px;top:253px;font-size:12.65px;color:#262626;transform:scaleX(0.959);">Code</div>
<div class="t" style="left:661.30px;top:272px;font-size:12.65px;color:#262626;transform:scaleX(0.970);">RC-10005323 - 121</div>
<div class="t" style="left:661.30px;top:291px;font-size:12.65px;color:#262626;transform:scaleX(0.970);">RC-10005323 - 343</div>
<div class="t" style="left:661.30px;top:309px;font-size:12.65px;color:#262626;transform:scaleX(0.970);">RC-10005323 - 232</div>
<div style="position:absolute;left:320px;top:266.5px;width:215.6px;height:38.8px;border:2px solid #4a8b67;box-sizing:border-box;"></div>
<div style="position:absolute;left:532.5px;top:302.5px;width:4px;height:4px;background:#2b5f40;"></div>
</div></body></html>
